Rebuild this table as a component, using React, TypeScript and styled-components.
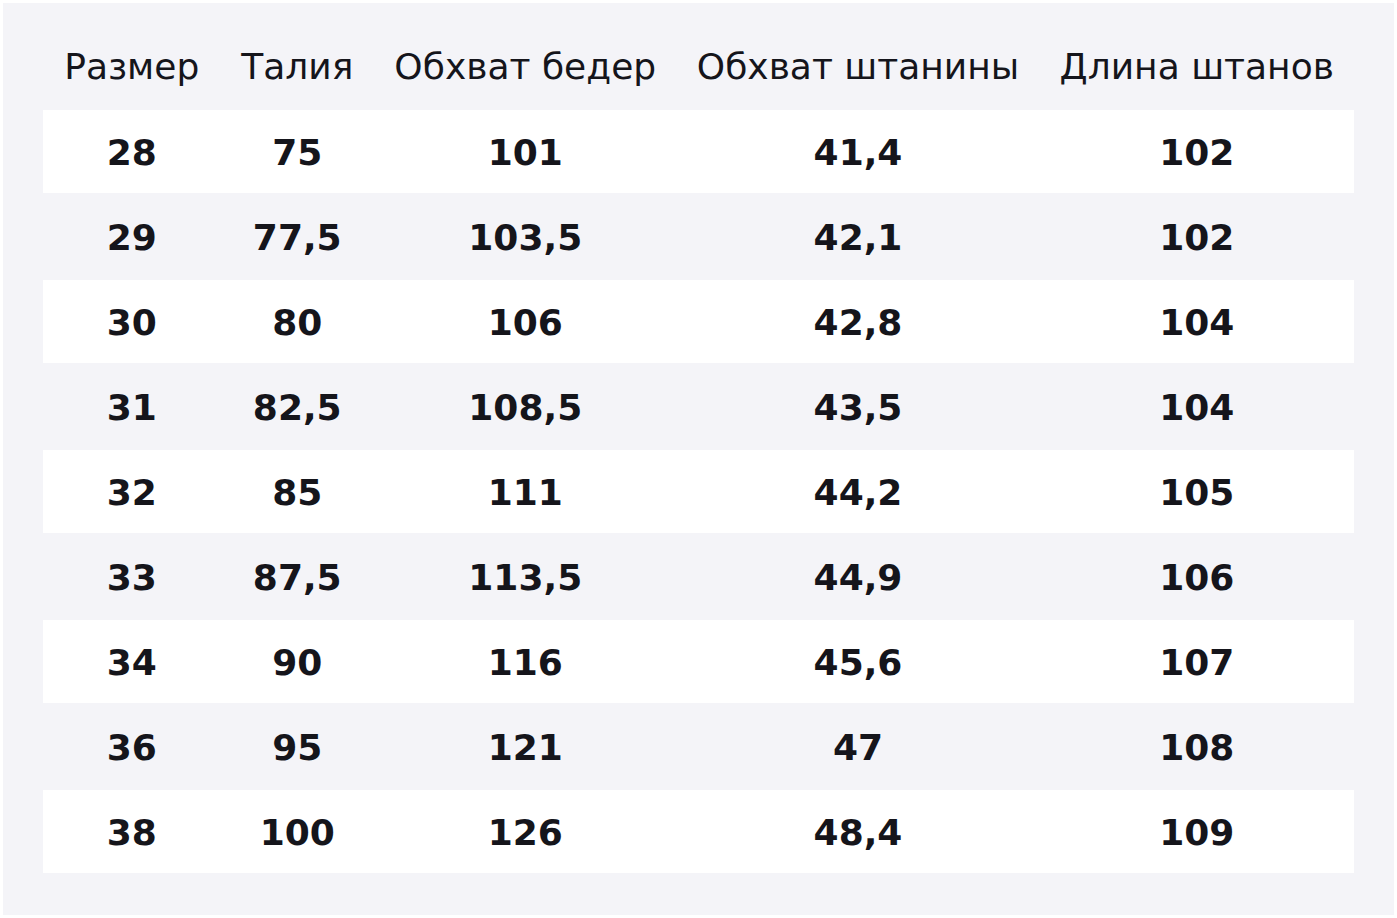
import React from "react";
import styled, { createGlobalStyle } from "styled-components";

const Global = createGlobalStyle`
  html, body { margin: 0; padding: 0; background: #ffffff; }
  body { font-family: "DejaVu Sans", "Liberation Sans", sans-serif; }
`;

const Panel = styled.div`
  margin: 3px;
  padding: 40px;
  background: #f4f4f8;
`;

const Table = styled.table`
  width: 100%;
  table-layout: fixed;
  border-collapse: separate;
  border-spacing: 0 2px;
  color: #15151b;
  font-size: 36px;
`;

const Col = styled.col<{ $w: number }>`
  width: ${(p) => p.$w}px;
`;

const HeadCell = styled.th`
  font-weight: 400;
  height: 63px;
  padding: 1px 0 0;
  box-sizing: border-box;
  text-align: center;
  vertical-align: top;
  white-space: nowrap;
  line-height: 42px;
`;

const Row = styled.tr<{ $alt: boolean }>`
  background: ${(p) => (p.$alt ? "transparent" : "#ffffff")};
`;

const Cell = styled.td`
  height: 83px;
  padding: 2px 0 0;
  box-sizing: border-box;
  text-align: center;
  vertical-align: middle;
  font-weight: 700;
  white-space: nowrap;
  line-height: 42px;
`;

const columns = [
  { title: "Размер", w: 177.5 },
  { title: "Талия", w: 153.5 },
  { title: "Обхват бедер", w: 302.5 },
  { title: "Обхват штанины", w: 363 },
  { title: "Длина штанов", w: 314.5 },
];

const rows: string[][] = [
  ["28", "75", "101", "41,4", "102"],
  ["29", "77,5", "103,5", "42,1", "102"],
  ["30", "80", "106", "42,8", "104"],
  ["31", "82,5", "108,5", "43,5", "104"],
  ["32", "85", "111", "44,2", "105"],
  ["33", "87,5", "113,5", "44,9", "106"],
  ["34", "90", "116", "45,6", "107"],
  ["36", "95", "121", "47", "108"],
  ["38", "100", "126", "48,4", "109"],
];

export default function App() {
  return (
    <>
      <Global />
      <Panel>
        <Table>
          <colgroup>
            {columns.map((c) => (
              <Col key={c.title} $w={c.w} />
            ))}
          </colgroup>
          <thead>
            <tr>
              {columns.map((c) => (
                <HeadCell key={c.title}>{c.title}</HeadCell>
              ))}
            </tr>
          </thead>
          <tbody>
            {rows.map((r, i) => (
              <Row key={r[0]} $alt={i % 2 === 1}>
                {r.map((c, j) => (
                  <Cell key={j}>{c}</Cell>
                ))}
              </Row>
            ))}
          </tbody>
        </Table>
      </Panel>
    </>
  );
}
